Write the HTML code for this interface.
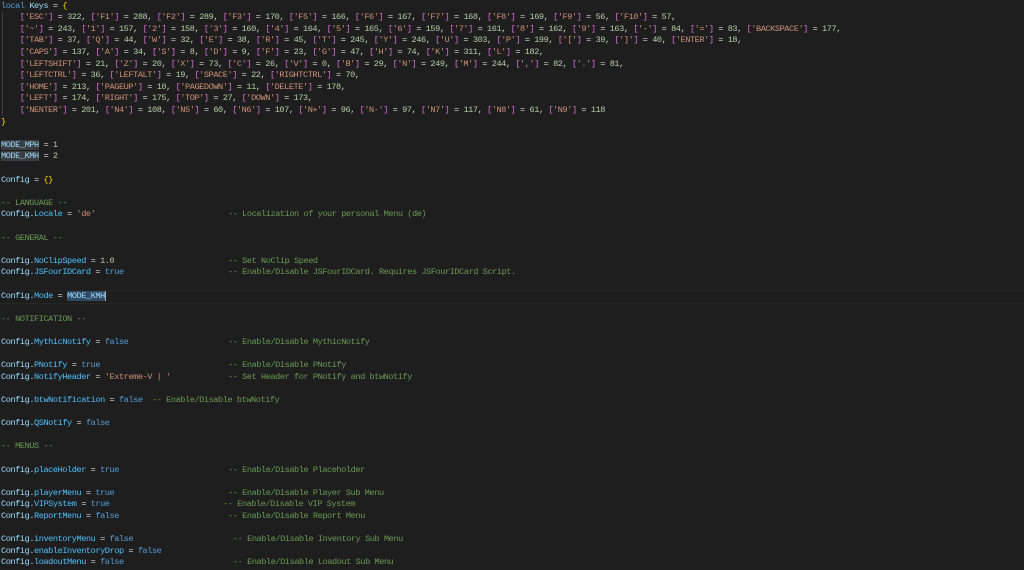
<!DOCTYPE html>
<html><head><meta charset="utf-8">
<style>
html,body{margin:0;padding:0;background:#1e1e1e;width:1024px;height:570px;overflow:hidden}
#ed{position:relative;font-family:"Liberation Mono",monospace;font-size:8.6px;letter-spacing:-0.44px;color:#d4d4d4}
.l{position:absolute;left:1px;height:11.6px;line-height:11.6px;white-space:pre;width:1020px;margin-top:0.5px}
u,s,em,b,i,q{text-decoration:none;font-style:normal;font-weight:normal}
q:before,q:after{content:none}
u{color:#da70d6}s{color:#ce9178}em{color:#b5cea8}
b{color:#569cd6}i{color:#9cdcfe}q{color:#4fc1ff}
.c{color:#6a9955;position:absolute}
.g{color:#ffd700}
.ig{position:absolute;left:2px;top:12px;width:1px;height:104px;background:#404040}
.cur{position:absolute;left:0;width:1024px;top:290px;height:11.6px;border-top:1px solid #262626;border-bottom:1px solid #262626}
.sel{background:#2f4a63}
.sel2{background:#3a3d41}
</style></head><body><div id="ed">
<div class="ig"></div>
<div class="cur"></div>
<div class="l" style="top:0px"><b>local</b> <i>Keys</i> = <span class="g">{</span></div>
<div class="l" style="top:11.6px">    <u>[</u><s>'ESC'</s><u>]</u> = <em>322</em>, <u>[</u><s>'F1'</s><u>]</u> = <em>288</em>, <u>[</u><s>'F2'</s><u>]</u> = <em>289</em>, <u>[</u><s>'F3'</s><u>]</u> = <em>170</em>, <u>[</u><s>'F5'</s><u>]</u> = <em>166</em>, <u>[</u><s>'F6'</s><u>]</u> = <em>167</em>, <u>[</u><s>'F7'</s><u>]</u> = <em>168</em>, <u>[</u><s>'F8'</s><u>]</u> = <em>169</em>, <u>[</u><s>'F9'</s><u>]</u> = <em>56</em>, <u>[</u><s>'F10'</s><u>]</u> = <em>57</em>,</div>
<div class="l" style="top:23.2px">    <u>[</u><s>'~'</s><u>]</u> = <em>243</em>, <u>[</u><s>'1'</s><u>]</u> = <em>157</em>, <u>[</u><s>'2'</s><u>]</u> = <em>158</em>, <u>[</u><s>'3'</s><u>]</u> = <em>160</em>, <u>[</u><s>'4'</s><u>]</u> = <em>164</em>, <u>[</u><s>'5'</s><u>]</u> = <em>165</em>, <u>[</u><s>'6'</s><u>]</u> = <em>159</em>, <u>[</u><s>'7'</s><u>]</u> = <em>161</em>, <u>[</u><s>'8'</s><u>]</u> = <em>162</em>, <u>[</u><s>'9'</s><u>]</u> = <em>163</em>, <u>[</u><s>'-'</s><u>]</u> = <em>84</em>, <u>[</u><s>'='</s><u>]</u> = <em>83</em>, <u>[</u><s>'BACKSPACE'</s><u>]</u> = <em>177</em>,</div>
<div class="l" style="top:34.8px">    <u>[</u><s>'TAB'</s><u>]</u> = <em>37</em>, <u>[</u><s>'Q'</s><u>]</u> = <em>44</em>, <u>[</u><s>'W'</s><u>]</u> = <em>32</em>, <u>[</u><s>'E'</s><u>]</u> = <em>38</em>, <u>[</u><s>'R'</s><u>]</u> = <em>45</em>, <u>[</u><s>'T'</s><u>]</u> = <em>245</em>, <u>[</u><s>'Y'</s><u>]</u> = <em>246</em>, <u>[</u><s>'U'</s><u>]</u> = <em>303</em>, <u>[</u><s>'P'</s><u>]</u> = <em>199</em>, <u>[</u><s>'['</s><u>]</u> = <em>39</em>, <u>[</u><s>']'</s><u>]</u> = <em>40</em>, <u>[</u><s>'ENTER'</s><u>]</u> = <em>18</em>,</div>
<div class="l" style="top:46.4px">    <u>[</u><s>'CAPS'</s><u>]</u> = <em>137</em>, <u>[</u><s>'A'</s><u>]</u> = <em>34</em>, <u>[</u><s>'S'</s><u>]</u> = <em>8</em>, <u>[</u><s>'D'</s><u>]</u> = <em>9</em>, <u>[</u><s>'F'</s><u>]</u> = <em>23</em>, <u>[</u><s>'G'</s><u>]</u> = <em>47</em>, <u>[</u><s>'H'</s><u>]</u> = <em>74</em>, <u>[</u><s>'K'</s><u>]</u> = <em>311</em>, <u>[</u><s>'L'</s><u>]</u> = <em>182</em>,</div>
<div class="l" style="top:58px">    <u>[</u><s>'LEFTSHIFT'</s><u>]</u> = <em>21</em>, <u>[</u><s>'Z'</s><u>]</u> = <em>20</em>, <u>[</u><s>'X'</s><u>]</u> = <em>73</em>, <u>[</u><s>'C'</s><u>]</u> = <em>26</em>, <u>[</u><s>'V'</s><u>]</u> = <em>0</em>, <u>[</u><s>'B'</s><u>]</u> = <em>29</em>, <u>[</u><s>'N'</s><u>]</u> = <em>249</em>, <u>[</u><s>'M'</s><u>]</u> = <em>244</em>, <u>[</u><s>','</s><u>]</u> = <em>82</em>, <u>[</u><s>'.'</s><u>]</u> = <em>81</em>,</div>
<div class="l" style="top:69.6px">    <u>[</u><s>'LEFTCTRL'</s><u>]</u> = <em>36</em>, <u>[</u><s>'LEFTALT'</s><u>]</u> = <em>19</em>, <u>[</u><s>'SPACE'</s><u>]</u> = <em>22</em>, <u>[</u><s>'RIGHTCTRL'</s><u>]</u> = <em>70</em>,</div>
<div class="l" style="top:81.2px">    <u>[</u><s>'HOME'</s><u>]</u> = <em>213</em>, <u>[</u><s>'PAGEUP'</s><u>]</u> = <em>10</em>, <u>[</u><s>'PAGEDOWN'</s><u>]</u> = <em>11</em>, <u>[</u><s>'DELETE'</s><u>]</u> = <em>178</em>,</div>
<div class="l" style="top:92.8px">    <u>[</u><s>'LEFT'</s><u>]</u> = <em>174</em>, <u>[</u><s>'RIGHT'</s><u>]</u> = <em>175</em>, <u>[</u><s>'TOP'</s><u>]</u> = <em>27</em>, <u>[</u><s>'DOWN'</s><u>]</u> = <em>173</em>,</div>
<div class="l" style="top:104.4px">    <u>[</u><s>'NENTER'</s><u>]</u> = <em>201</em>, <u>[</u><s>'N4'</s><u>]</u> = <em>108</em>, <u>[</u><s>'N5'</s><u>]</u> = <em>60</em>, <u>[</u><s>'N6'</s><u>]</u> = <em>107</em>, <u>[</u><s>'N+'</s><u>]</u> = <em>96</em>, <u>[</u><s>'N-'</s><u>]</u> = <em>97</em>, <u>[</u><s>'N7'</s><u>]</u> = <em>117</em>, <u>[</u><s>'N8'</s><u>]</u> = <em>61</em>, <u>[</u><s>'N9'</s><u>]</u> = <em>118</em></div>
<div class="l" style="top:116px"><span class="g">}</span></div>
<div class="l" style="top:139.2px"><i class="sel2">MODE_MPH</i> = <em>1</em></div>
<div class="l" style="top:150.8px"><i class="sel2">MODE_KMH</i> = <em>2</em></div>
<div class="l" style="top:174px"><i>Config</i> = <span class="g">{}</span></div>
<div class="l" style="top:197.2px"><span class="c" style="left:0">-- LANGUAGE --</span></div>
<div class="l" style="top:208.8px"><i>Config</i>.<q>Locale</q> = <s>'de'</s><span class="c" style="left:227px">-- Localization of your personal Menu (de)</span></div>
<div class="l" style="top:232px"><span class="c" style="left:0">-- GENERAL --</span></div>
<div class="l" style="top:255.2px"><i>Config</i>.<q>NoClipSpeed</q> = <em>1.0</em><span class="c" style="left:227px">-- Set NoClip Speed</span></div>
<div class="l" style="top:266.8px"><i>Config</i>.<q>JSFourIDCard</q> = <b>true</b><span class="c" style="left:227px">-- Enable/Disable JSFourIDCard. Requires JSFourIDCard Script.</span></div>
<div class="l" style="top:290px"><i>Config</i>.<q>Mode</q> = <i class="sel">MODE_KMH</i><span style="border-left:1px solid #aeafad"></span></div>
<div class="l" style="top:313.2px"><span class="c" style="left:0">-- NOTIFICATION --</span></div>
<div class="l" style="top:336.4px"><i>Config</i>.<q>MythicNotify</q> = <b>false</b><span class="c" style="left:227px">-- Enable/Disable MythicNotify</span></div>
<div class="l" style="top:359.6px"><i>Config</i>.<q>PNotify</q> = <b>true</b><span class="c" style="left:227px">-- Enable/Disable PNotify</span></div>
<div class="l" style="top:371.2px"><i>Config</i>.<q>NotifyHeader</q> = <s>'Extreme-V | '</s><span class="c" style="left:227px">-- Set Header for PNotify and btwNotify</span></div>
<div class="l" style="top:394.4px"><i>Config</i>.<q>btwNotification</q> = <b>false</b>  <span style="color:#6a9955">-- Enable/Disable btwNotify</span></div>
<div class="l" style="top:417.6px"><i>Config</i>.<q>QSNotify</q> = <b>false</b></div>
<div class="l" style="top:440.8px"><span class="c" style="left:0">-- MENUS --</span></div>
<div class="l" style="top:464px"><i>Config</i>.<q>placeHolder</q> = <b>true</b><span class="c" style="left:227px">-- Enable/Disable Placeholder</span></div>
<div class="l" style="top:487.2px"><i>Config</i>.<q>playerMenu</q> = <b>true</b><span class="c" style="left:227px">-- Enable/Disable Player Sub Menu</span></div>
<div class="l" style="top:498.8px"><i>Config</i>.<q>VIPSystem</q> = <b>true</b><span class="c" style="left:222px">-- Enable/Disable VIP System</span></div>
<div class="l" style="top:510.4px"><i>Config</i>.<q>ReportMenu</q> = <b>false</b><span class="c" style="left:227px">-- Enable/Disable Report Menu</span></div>
<div class="l" style="top:533.6px"><i>Config</i>.<q>inventoryMenu</q> = <b>false</b><span class="c" style="left:232px">-- Enable/Disable Inventory Sub Menu</span></div>
<div class="l" style="top:545.2px"><i>Config</i>.<q>enableInventoryDrop</q> = <b>false</b></div>
<div class="l" style="top:556.8px"><i>Config</i>.<q>loadoutMenu</q> = <b>false</b><span class="c" style="left:232px">-- Enable/Disable Loadout Sub Menu</span></div>
</div></body></html>
